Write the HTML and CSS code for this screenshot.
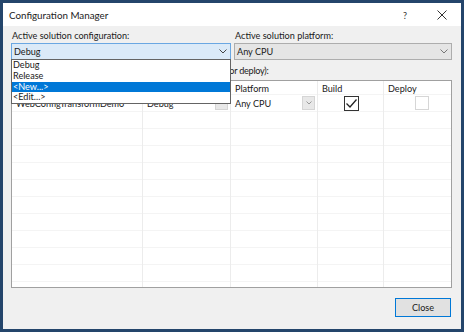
FILE: index.html
```html
<!DOCTYPE html>
<html>
<head>
<meta charset="utf-8">
<link rel="stylesheet" href="styles.css">
</head>
<body>
<div class="window">
  <div class="titlebar">
    <span class="title">Configuration Manager</span>
    <span class="tb-btn help">?</span>
    <span class="tb-btn close">
      <svg width="10" height="10" viewBox="0 0 10 10"><path d="M0.5 0.5 L9.5 9.5 M9.5 0.5 L0.5 9.5" stroke="#333" stroke-width="1" fill="none"/></svg>
    </span>
  </div>
  <div class="content">
    <div class="top-row">
      <div class="field left">
        <div class="label">Active solution configuration:</div>
        <div class="combo open">
          <span>Debug</span>
          <svg class="chev" width="8" height="5" viewBox="0 0 8 5"><path d="M0.5 0.5 L4 4 L7.5 0.5" stroke="#444" fill="none"/></svg>
        </div>
        <div class="droplist">
          <div class="item">Debug</div>
          <div class="item">Release</div>
          <div class="item sel">&lt;New...&gt;</div>
          <div class="item">&lt;Edit...&gt;</div>
        </div>
      </div>
      <div class="field right">
        <div class="label">Active solution platform:</div>
        <div class="combo">
          <span>Any CPU</span>
          <svg class="chev" width="8" height="5" viewBox="0 0 8 5"><path d="M0.5 0.5 L4 4 L7.5 0.5" stroke="#777" fill="none"/></svg>
        </div>
      </div>
    </div>
    <div class="label ctx">Project contexts (check the project configurations to build or deploy):</div>
    <div class="grid">
      <div class="col c-proj">
        <div class="hd">Project</div>
        <div class="cell">WebConfigTransformDemo</div>
      </div>
      <div class="col c-conf">
        <div class="hd">Configuration</div>
        <div class="cell">Debug<span class="mini"><svg width="6" height="4" viewBox="0 0 6 4"><path d="M0.5 0.5 L3 3 L5.5 0.5" stroke="#999" fill="none"/></svg></span></div>
      </div>
      <div class="col c-plat">
        <div class="hd">Platform</div>
        <div class="cell">Any CPU<span class="mini"><svg width="6" height="4" viewBox="0 0 6 4"><path d="M0.5 0.5 L3 3 L5.5 0.5" stroke="#999" fill="none"/></svg></span></div>
      </div>
      <div class="col c-build">
        <div class="hd">Build</div>
        <div class="cell center"><span class="chk on"><svg width="13" height="11" viewBox="0 0 13 11"><path d="M1.5 5.5 L5 9 L11.5 1.5" stroke="#222" stroke-width="1.3" fill="none"/></svg></span></div>
      </div>
      <div class="col c-dep">
        <div class="hd">Deploy</div>
        <div class="cell center"><span class="chk off"></span></div>
      </div>
    </div>
    <div class="footer">
      <button class="btn">Close</button>
    </div>
  </div>
</div>
</body>
</html>
```

FILE: styles.css
```css
* { box-sizing: border-box; }
html, body { margin: 0; padding: 0; }
body {
  width: 464px;
  height: 332px;
  background: #24456b;
  font-family: Lato, "Noto Sans", sans-serif;
  font-size: 9.1px;
  color: #1a1a1a;
}
.window {
  width: 464px;
  height: 332px;
  border: 3px solid #24456b;
  display: flex;
  flex-direction: column;
  background: #f0f0f0;
}
.titlebar {
  height: 23px;
  background: #ffffff;
  display: flex;
  align-items: center;
  flex: none;
  padding-top: 1px;
}
.title {
  flex: 1;
  padding-left: 6px;
  font-size: 9.8px;
  color: #222;
}
.tb-btn {
  display: flex;
  align-items: center;
  justify-content: center;
  color: #333;
}
.help { width: 20px; font-size: 9px; margin-right: 17px; }
.close { width: 20px; margin-right: 9px; }
.content {
  flex: 1;
  display: flex;
  flex-direction: column;
  padding: 3px 9px 0 8px;
}
.top-row {
  display: flex;
  gap: 3px;
}
.field { position: relative; }
.field.left { width: 220px; }
.field.right { width: 218px; }
.label {
  height: 14px;
  line-height: 14px;
  padding-left: 1px;
  white-space: nowrap;
}
.combo {
  height: 17px;
  border: 1px solid #adadad;
  background: #e5e5e5;
  display: flex;
  align-items: center;
  justify-content: space-between;
  padding: 0 3px 0 2px;
}
.combo.open {
  background: #dbeaf8;
  border-color: #6aa7e2;
}
.droplist {
  position: absolute;
  left: 0;
  top: 30px;
  width: 220px;
  background: #fff;
  border: 1px solid #646464;
  z-index: 5;
}
.item {
  height: 10.8px;
  line-height: 10.8px;
  padding-left: 1px;
}
.item.sel {
  background: #0078d7;
  color: #fff;
}
.ctx {
  margin-top: 4px;
  height: 14px;
  letter-spacing: -0.25px;
}
.grid {
  margin-top: 2px;
  height: 208px;
  border: 1px solid #a0a0a0;
  background-color: #fff;
  background-image: linear-gradient(to bottom, transparent 0, transparent 16px, #f4f4f4 16px, #f4f4f4 17px);
  background-size: 100% 17px;
  background-position: 0 -3px;
  display: flex;
}
.col {
  border-right: 1px solid #ececec;
  display: flex;
  flex-direction: column;
}
.col:last-child { border-right: none; }
.c-proj { width: 131px; }
.c-conf { width: 88px; }
.c-plat { width: 87px; }
.c-build { width: 66px; }
.c-dep { flex: 1; }
.hd {
  height: 14px;
  line-height: 16px;
  padding-left: 4px;
  white-space: nowrap;
}
.cell {
  height: 16px;
  display: flex;
  align-items: center;
  padding-left: 4px;
  white-space: nowrap;
  position: relative;
}
.cell.center { justify-content: center; padding-left: 0; }
.mini {
  position: absolute;
  right: 2px;
  top: 1px;
  width: 13px;
  height: 14px;
  border: 1px solid #d5d5d5;
  background: #e8e8e8;
  display: flex;
  align-items: center;
  justify-content: center;
}
.chk {
  width: 15px;
  height: 15px;
  display: flex;
  align-items: center;
  justify-content: center;
  background: #fff;
}
.chk.on { border: 1px solid #333; margin-left: 1px; }
.chk.off { border: 1px solid #d6d6d6; width: 14px; height: 14px; margin-left: 9px; }
.footer {
  flex: 1;
  display: flex;
  justify-content: flex-end;
  align-items: flex-start;
  padding-top: 10px;
}
.btn {
  width: 56px;
  height: 19px;
  border: 1px solid #0078d7;
  background: #e1e1e1;
  font-family: Lato, "Noto Sans", sans-serif;
  font-size: 9.1px;
  color: #1a1a1a;
  padding: 0;
  margin-right: 1px;
}
```
